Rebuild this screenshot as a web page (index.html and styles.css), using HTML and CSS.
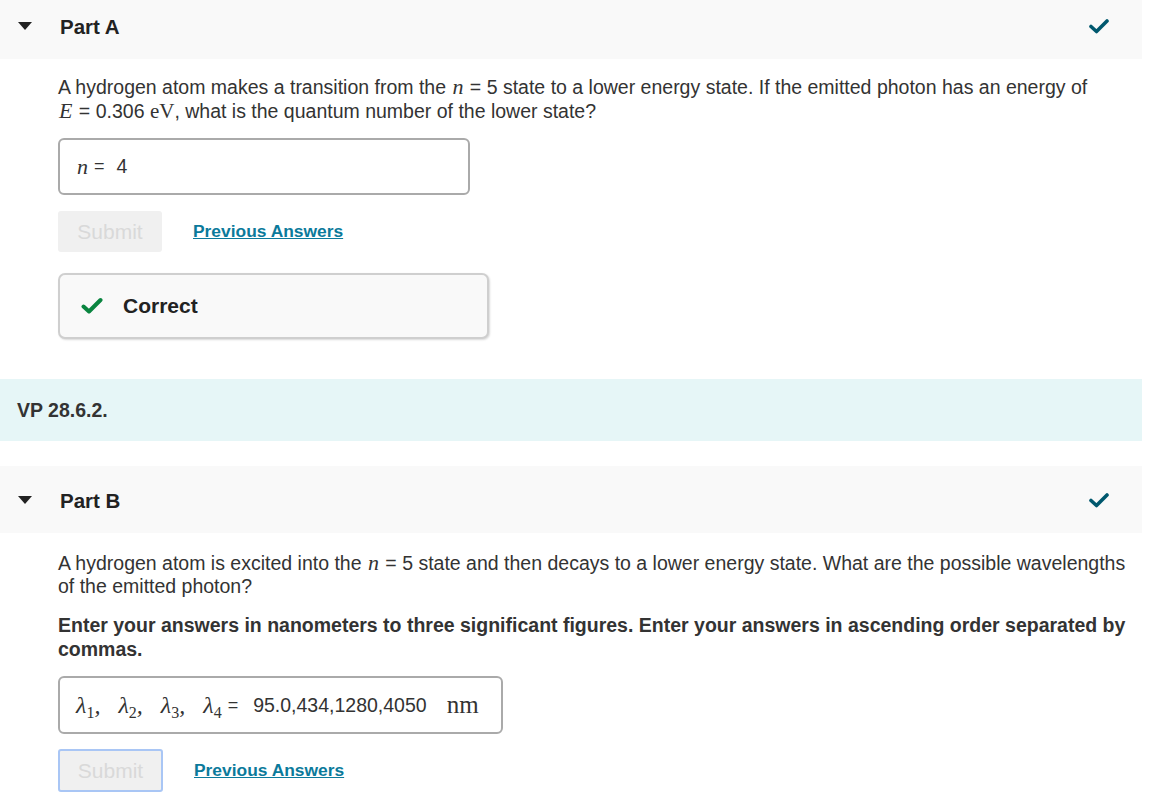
FILE: index.html
```html
<!DOCTYPE html>
<html>
<head>
<meta charset="utf-8">
<link rel="stylesheet" href="styles.css">
</head>
<body>
<div class="page">
  <section class="part first">
    <div class="part-header">
      <span class="tri"></span>
      <span class="part-title">Part A</span>
      <svg class="done" width="20" height="16" viewBox="0 0 20 16"><path d="M2 8.5 L7.5 13.5 L18 3" fill="none" stroke="#00586e" stroke-width="3.6" stroke-linecap="round" stroke-linejoin="round"/></svg>
    </div>
    <div class="part-body">
      <p class="q">A hydrogen atom makes a transition from the <span class="mi">n</span> = 5 state to a lower energy state. If the emitted photon has an energy of <span class="nw"><span class="mi">E</span> = 0.306 <span class="mr">eV</span></span>, what is the quantum number of the lower state?</p>
      <div class="answer a1"><span class="mi">n</span><span class="eq">=</span><span class="val">4</span></div>
      <div class="actions">
        <span class="submit">Submit</span>
        <a class="prev" href="#">Previous Answers</a>
      </div>
      <div class="correct">
        <svg width="22" height="18" viewBox="0 0 22 18"><path d="M2.5 9.5 L8 14.5 L19.5 3" fill="none" stroke="#0a8540" stroke-width="4" stroke-linecap="round" stroke-linejoin="round"/></svg>
        <span>Correct</span>
      </div>
    </div>
  </section>
  <div class="vp">VP 28.6.2.</div>
  <section class="part">
    <div class="part-header">
      <span class="tri"></span>
      <span class="part-title">Part B</span>
      <svg class="done" width="20" height="16" viewBox="0 0 20 16"><path d="M2 8.5 L7.5 13.5 L18 3" fill="none" stroke="#00586e" stroke-width="3.6" stroke-linecap="round" stroke-linejoin="round"/></svg>
    </div>
    <div class="part-body">
      <p class="q qb">A hydrogen atom is excited into the <span class="mi">n</span> = 5 state and then decays to a lower energy state. What are the possible wavelengths of the emitted photon?</p>
      <p class="instr">Enter your answers in nanometers to three significant figures. Enter your answers in ascending order separated by commas.</p>
      <div class="answer a2"><span class="lam"><span class="l">λ<sub>1</sub>,</span><span class="l">λ<sub>2</sub>,</span><span class="l">λ<sub>3</sub>,</span><span class="l">λ<sub>4</sub></span></span><span class="eq">=</span><span class="val">95.0,434,1280,4050</span><span class="unit">nm</span></div>
      <div class="actions b">
        <span class="submit focus">Submit</span>
        <a class="prev" href="#">Previous Answers</a>
      </div>
    </div>
  </section>
</div>
</body>
</html>
```
FILE: styles.css
```css
html, body { margin: 0; padding: 0; background: #fff; }
body { font-family: "Liberation Sans", Arial, sans-serif; color: #333; overflow: hidden; }
.page { width: 1142px; }
.part.first { margin-top: -8px; }
.part-header {
  box-sizing: border-box; height: 67px; background: #f9f9f9; display: flex; align-items: center;
  padding-left: 18px; padding-right: 33px; padding-top: 2px;
}
.tri {
  width: 0; height: 0; border-left: 7.5px solid transparent; border-right: 7.5px solid transparent;
  border-top: 8px solid #222; margin-top: -2px;
}
.part-title { margin-left: 28px; font-size: 20.5px; font-weight: bold; color: #222; flex: 1; }
.done { display: block; margin-top: -2px; }
.part-body { padding-left: 58px; padding-right: 14px; }
.q { margin: 16px 0 0; font-size: 19.5px; line-height: 23px; color: #333; }
.q.qb { margin-top: 18px; }
.nw { white-space: nowrap; }
.instr { margin: 15px 0 0; font-size: 19.5px; line-height: 24px; font-weight: bold; color: #333; }
.mi { font-family: "Liberation Serif", "Times New Roman", serif; font-style: italic; font-size: 22px; padding-right: 1px; }
.q .mi { margin-left: 1px; }
.mr { font-family: "Liberation Serif", "Times New Roman", serif; font-size: 21px; }
.answer {
  box-sizing: border-box; border: 2px solid #aaa; border-radius: 6px; background: #fff;
  display: flex; align-items: center; padding-left: 17px; font-size: 19.5px; color: #333;
}
.a1 { width: 412px; height: 57px; margin-top: 15px; }
.a2 { width: 445px; height: 58px; margin-top: 15px; padding-left: 16px; }
.eq { margin: 0 12px 0 8px; font-size: 18px; }
.a1 .eq { margin-left: 5px; margin-right: 12px; }
.a2 .eq { margin-left: 6px; margin-right: 15px; }
.lam { font-family: "Liberation Serif", "Times New Roman", serif; font-size: 24px; font-style: italic; display: flex; }
.lam .l { margin-right: 18px; }
.lam .l:last-child { margin-right: 0; }
.lam sub { font-style: normal; font-size: 16px; vertical-align: -5px; line-height: 0; }
.unit { font-family: "Liberation Serif", "Times New Roman", serif; font-size: 25px; margin-left: 20px; }
.actions { display: flex; align-items: center; margin-top: 16px; }
.actions.b { margin-top: 15px; }
.submit {
  box-sizing: border-box; width: 104px; height: 41px; background: #f0f0f0; color: #d9d9d9;
  border-radius: 3px; display: flex; align-items: center; justify-content: center; font-size: 21px;
}
.submit.focus { width: 105px; height: 43px; border: 2px solid #a9c6f5; }
.prev { margin-left: 31px; font-size: 17.4px; font-weight: bold; color: #0b7a9b; text-decoration: underline; }
.correct {
  box-sizing: border-box; width: 431px; height: 66px; margin-top: 21px;
  background: #f9f9f9; border: 2px solid #cfcfcf; border-radius: 7px; box-shadow: 1px 1px 2px rgba(0,0,0,0.15);
  display: flex; align-items: center; padding-left: 21px;
}
.correct span { margin-left: 20px; font-size: 21px; font-weight: bold; color: #222; }
.vp {
  margin-top: 40px; height: 62px; background: #e6f6f7; display: flex; align-items: center;
  padding-left: 17px; font-size: 19.5px; font-weight: bold; color: #333; margin-bottom: 25px;
}
```
